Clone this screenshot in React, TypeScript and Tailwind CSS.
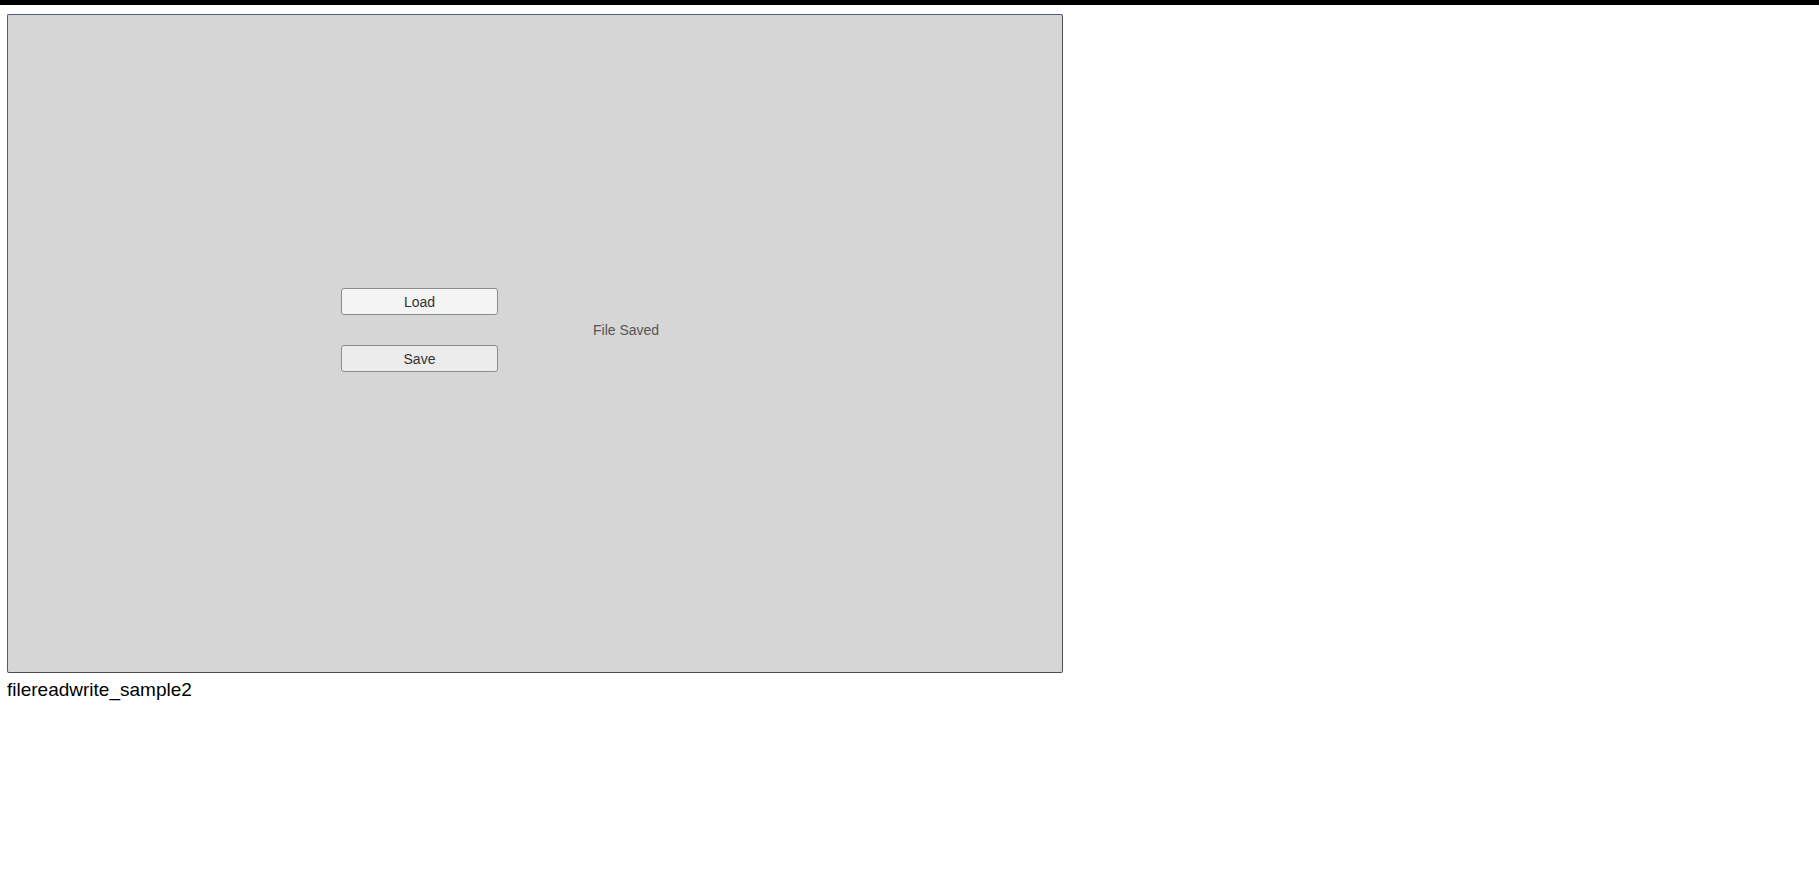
import React from 'react';

export default function App() {
    return (
        <div className="min-h-[876px] bg-white font-['Liberation_Sans',Arial,sans-serif]">
            {/* top bar */}
            <div className="h-[5px] bg-black" />

            <div className="pl-[7px] pt-[9px]">
                {/* game canvas */}
                <div className="w-[1056px] h-[659px] bg-[#d6d6d6] border border-t-[#4d5f78] border-l-[#4d5f78] border-r-[#4a4f58] border-b-[#4f4b48] rounded-[2px]">
                    <div className="flex items-center pl-[333px] pt-[273px]">
                        <div className="flex flex-col gap-[30px]">
                            <button className="w-[157px] h-[27px] pt-px bg-[#f4f4f4] border border-[#8c8c8c] rounded-[3px] text-[14px] text-[#333333]">
                                Load
                            </button>
                            <button className="w-[157px] h-[27px] pt-px bg-[#ececec] border border-[#8c8c8c] rounded-[3px] text-[14px] text-[#333333]">
                                Save
                            </button>
                        </div>
                        <div className="ml-[95px] text-[14px] text-[#555555]">File Saved</div>
                    </div>
                </div>

                <div className="mt-[4px] text-[19px] leading-[26px] text-black">filereadwrite_sample2</div>
            </div>
        </div>
    );
}
